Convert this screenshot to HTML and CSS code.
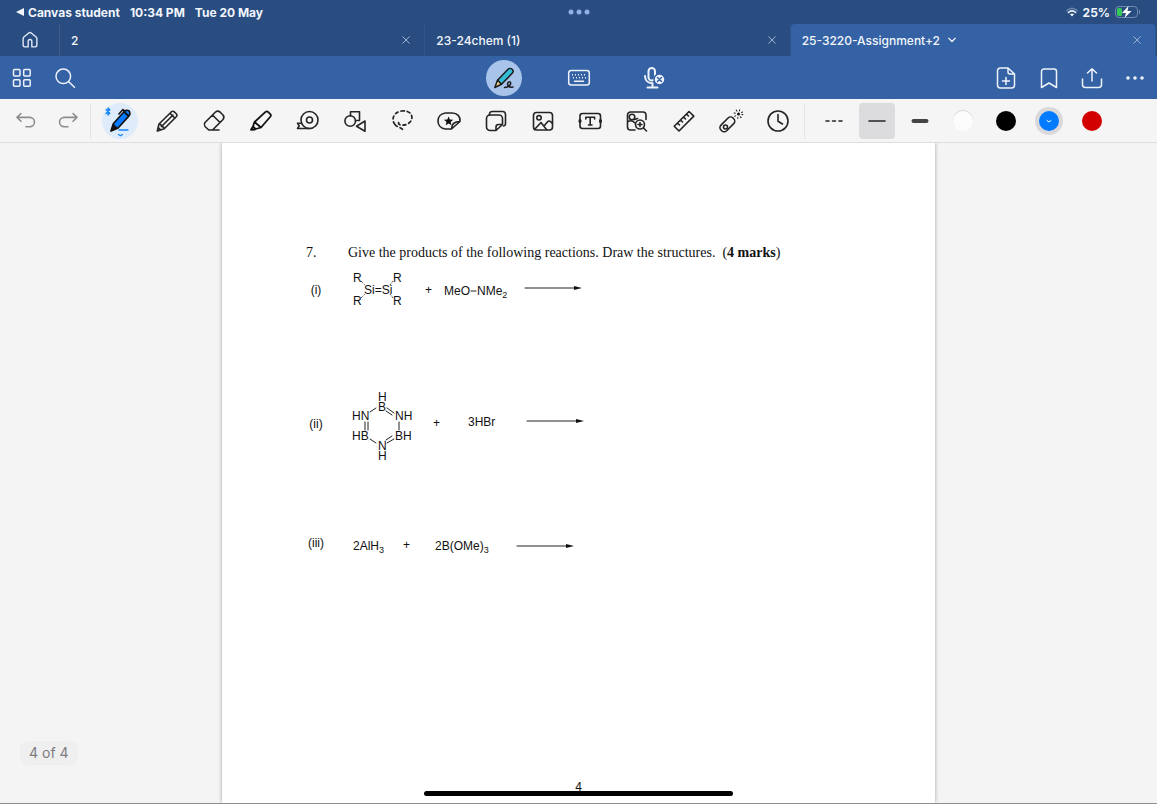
FILE: index.html
```html
<!DOCTYPE html>
<html lang="en">
<head>
    <meta charset="UTF-8">
    <meta name="viewport" content="width=device-width, initial-scale=1.0">
    <link rel="stylesheet" href="styles.css">
    <title>25-3220-Assignment+2</title>
</head>
<body>

    <header>
        <div class="status-bar">
            <div class="status-left">
                <a href="#" class="back-link"><svg class="back-arrow" viewBox="0 0 8 8"><path d="M8 0v8L0 4z"/></svg>Canvas student</a>
                <span>10:34 PM</span>
                <span class="date">Tue 20 May</span>
            </div>
            <svg class="multitask" viewBox="0 0 22 6"><circle cx="3" cy="3" r="2.5"/><circle cx="11" cy="3" r="2.5"/><circle cx="19" cy="3" r="2.5"/></svg>
            <div class="status-right">
                <svg class="wifi" viewBox="0 0 12 10"><path class="faint" d="M.8 3.6Q6-1 11.2 3.6"/><path d="M2.4 5.5Q6 2.4 9.6 5.5"/><path class="dot" d="M4 7.3Q6 5.8 8 7.3L6 9.5z"/></svg>
                <span>25%</span>
                <svg class="battery" viewBox="0 0 26 12"><rect class="case" x=".5" y=".5" width="22" height="11" rx="3.5"/><path class="case" d="M24.5 4.5v3"/><rect class="level" x="2" y="2" width="5" height="8" rx="1.5"/><path class="bolt" d="M13.5 0L7 7H11L9.5 12 16.500 5H12.500z"/></svg>
            </div>
        </div>

        <nav class="tabs">
            <button class="home" aria-label="Home"><svg viewBox="0 0 24 24"><path d="M10 19.500H6.500a2 2 0 0 1-2-2V10.500q0-1 .8-1.700L10.700 4.300q1.300-1 2.600 0L18.700 8.800q.8.700.8 1.700V17.500a2 2 0 0 1-2 2H14V13.500a2 2 0 0 0-4 0z"/></svg></button>
            <div class="tab">
                <a href="#">2</a>
                <button class="close" aria-label="Close tab"><svg viewBox="0 0 8 8"><path d="M.7.7l6.600 6.600M7.300.7L.7 7.300"/></svg></button>
            </div>
            <div class="tab">
                <a href="#">23-24chem (1)</a>
                <button class="close" aria-label="Close tab"><svg viewBox="0 0 8 8"><path d="M.7.7l6.600 6.600M7.300.7L.7 7.300"/></svg></button>
            </div>
            <div class="tab active">
                <a href="#">25-3220-Assignment+2 <svg class="chevron" viewBox="0 0 8 6"><path d="M.8 1.200L4 4.400l3.200-3.200"/></svg></a>
                <button class="close" aria-label="Close tab"><svg viewBox="0 0 8 8"><path d="M.7.7l6.600 6.600M7.300.7L.7 7.300"/></svg></button>
            </div>
        </nav>

        <div class="nav-bar">
            <div class="nav-group">
                <button aria-label="Pages"><svg viewBox="0 0 24 24"><rect x="3.500" y="3.500" width="6.500" height="6.500" rx="1"/><rect x="13.700" y="3.500" width="6.500" height="6.500" rx="1"/><rect x="3.500" y="13.700" width="6.500" height="6.500" rx="1"/><rect x="13.700" y="13.700" width="6.500" height="6.500" rx="1"/></svg></button>
                <button aria-label="Search"><svg viewBox="0 0 24 24"><circle cx="10.300" cy="10.300" r="7.300"/><path d="M15.700 15.700L21.500 21.300"/></svg></button>
            </div>
            <div class="nav-group modes">
                <button class="mode-active" aria-label="Write">
                    <svg viewBox="0 0 24 24">
                        <g class="ink">
                            <path fill="#35bcd6" d="M5.500 14.300L16 3.300a2.900 2.900 0 0 1 4.200 4L9.500 18.300z"/>
                            <path fill="#f5d78a" d="M5.500 14.300L2.800 21.500 9.500 18.300z"/>
                            <path d="M12.500 21.500c4-.5 7-3 6-5s-4 .5-2.500 3 3 2 5 1.500"/>
                        </g>
                    </svg>
                </button>
                <button aria-label="Type"><svg viewBox="0 0 24 24"><rect x="1.700" y="4.500" width="20.600" height="14.500" rx="2.500"/><path class="keys" d="M5 8.700h14.500M6 11.800h13"/><path d="M7.500 15.300h9"/></svg></button>
                <button aria-label="Record">
                    <svg viewBox="0 0 24 24"><rect class="mic" x="6.500" y="2" width="6.500" height="12.500" rx="3.200"/><path class="mic" d="M3 10c0 4 2.500 7.300 7.500 7.300v3.500M5.500 21.500h10"/><circle class="mic-badge" cx="17.500" cy="13.500" r="5.500"/><path class="mic-x" d="M15.500 11.500l4 4M19.500 11.500l-4 4"/></svg>
                </button>
            </div>
            <div class="nav-group right">
                <button aria-label="Add page"><svg viewBox="0 0 24 24"><path d="M14 2H6.500a3 3 0 0 0-3 3V19a3 3 0 0 0 3 3h11a3 3 0 0 0 3-3V8zM14 2v4a2 2 0 0 0 2 2h4.500M12 11.500v7M8.500 15h7"/></svg></button>
                <button aria-label="Bookmark"><svg viewBox="0 0 24 24"><path d="M4.500 21.500V5.500a2.500 2.500 0 0 1 2.500-2.500h10a2.500 2.500 0 0 1 2.500 2.500V21.500L12 17z"/></svg></button>
                <button aria-label="Share"><svg viewBox="0 0 24 24"><path d="M2.500 13v5.500a3 3 0 0 0 3 3h13a3 3 0 0 0 3-3V13M12 15V3M7.500 7L12 2.800 16.500 7"/></svg></button>
                <button aria-label="More"><svg viewBox="0 0 24 24"><g class="dots"><circle cx="5" cy="12" r="1.800"/><circle cx="12" cy="12" r="1.800"/><circle cx="19" cy="12" r="1.800"/></g></svg></button>
            </div>
        </div>
    </header>

    <div class="toolbar">
        <div class="history">
            <button aria-label="Undo"><svg viewBox="0 0 24 24"><path d="M7 4.500L3 8.400 7 12.300M3 8.400H15.800a4.600 4.600 0 0 1 0 9.300H12"/></svg></button>
            <button aria-label="Redo"><svg viewBox="0 0 24 24"><path d="M17 4.500L21 8.400 17 12.300M21 8.400H8.200a4.600 4.600 0 0 0 0 9.300H12"/></svg></button>
        </div>
        <div class="tools">
            <button class="pen" aria-label="Pen">
                <svg viewBox="0 0 36 36">
                    <path class="blue-line" d="M4 6.500L7.800 10.300 6 12V5l1.800 1.700-3.800 3.800M17 27h9M16.500 31.500l2 1.200 2-1.200"/>
                    <g transform="rotate(42 18 18)">
                        <path class="pen-body" d="M14.800 8.500h6.500v16L18 31.500 14.800 24.500z"/>
                        <path class="pen-cap" d="M15 8.500V6.500q3-4 6 0V8.500z"/>
                        <path class="pen-tip" d="M14.500 24.500h7L18 32z"/>
                        <path class="pen-clip" d="M14.800 7.500h-2.300v6"/>
                    </g>
                </svg>
            </button>
            <button aria-label="Pencil"><svg viewBox="0 0 24 24"><path d="M4 15L16.500 2.700q1.300-1 2.500 0L21.500 5q1 1.200 0 2.500L9.200 19.800 2.300 22zM15 4.200l5 5M6.500 17.500L18 6M4 15q2-.4 2.500 2.500Q9 17.500 9.200 19.800M2.300 22l1-3.500 2.500 2.500z"/></svg></button>
            <button aria-label="Eraser"><svg viewBox="0 0 24 24"><path d="M3 13.500L13.500 3q2.200-1.800 4.500 0L21 6q1.800 2.200 0 4.500L10.500 21H6.800L3 17.500q-1.500-2 0-4zM10.500 6L18 13.500M6.800 21H17"/></svg></button>
            <button aria-label="Highlighter"><svg viewBox="0 0 24 24"><path class="bold" d="M5.500 13L16.500 2.900Q18 1.900 19 2.900L21.500 5.300Q22.300 6.300 21.500 7.500L12 18.500 6.500 20 4 17.500zM5.500 13l6.500 5.500M4 17.500L2 20.800 6 20.500"/></svg></button>
            <button aria-label="Tape"><svg viewBox="0 0 24 24"><circle cx="13.500" cy="11" r="8.500"/><circle cx="13.500" cy="11" r="3"/><path d="M13.500 19.500H1.500L3.200 17 1.500 14.200H5.500"/></svg></button>
            <button aria-label="Shapes"><svg viewBox="0 0 24 24"><path d="M7.500 7V2.800H16.500V11.500H12.500"/><circle cx="7.200" cy="12" r="5.300"/><path d="M22 12V22.300L13.500 17.200z"/></svg></button>
            <button aria-label="Lasso"><svg viewBox="0 0 24 24"><path class="dashed" d="M5 15.500C1 11 3 3 12 2S24 8 20.500 12.500 8 17.500 8.500 13.500M5 15.500C8 19 12 18 13.500 22"/></svg></button>
            <button aria-label="Elements"><svg viewBox="0 0 24 24"><path d="M14.500 20H8.500C-1.500 19-1.500 5 8.500 4h6.500C20.500 4 23.500 7.500 23 12.500L14.500 20C14.500 15.500 17 12.500 23 12.500"/><path class="solid" d="M11.600 7.500l1.300 3 3.300.3-2.500 2.200.8 3.300-2.900-1.800-2.900 1.800.8-3.300L7 10.800l3.300-.3z"/></svg></button>
            <button aria-label="Sticky notes"><svg viewBox="0 0 24 24"><path d="M5.500 6V5a2.500 2.500 0 0 1 2.500-2.500H18.500a3 3 0 0 1 3 3V14.500a2.500 2.500 0 0 1-2 2.500"/><path d="M11.500 21.500H6A3.500 3.500 0 0 1 2.500 18V9.500A3.500 3.500 0 0 1 6 6H15a3.500 3.500 0 0 1 3.500 3.500V15.500L12 21.500V18a2.500 2.500 0 0 1 2.500-2.500h4"/></svg></button>
            <button aria-label="Image"><svg viewBox="0 0 24 24"><rect x="2.500" y="3.500" width="19" height="17.500" rx="3"/><circle cx="8" cy="8.800" r="2.200"/><path d="M3.500 20.500L10 13.500 15.500 20.500M13 17L17 12.300Q18.500 11 21.500 14.500"/></svg></button>
            <button aria-label="Text"><svg viewBox="0 0 24 24"><rect x="2" y="4.500" width="20.500" height="15" rx="2.500"/><path d="M7.800 10V8.200H16.600V10M12.200 8.200V16M10.500 16h3.500"/><path class="handle" d="M2 11.500v1M22.500 11.500v1"/></svg></button>
            <button aria-label="Image zoom"><svg viewBox="0 0 24 24"><path d="M10 21H5.500A3 3 0 0 1 2.500 18V6A3 3 0 0 1 5.500 3H18a3 3 0 0 1 3 3v4.500"/><circle cx="7" cy="8" r="2.800"/><path d="M3 12.500Q6.500 10.500 10 14M9.500 10.500L12.500 9.500"/><circle cx="15" cy="15.500" r="4.500"/><path d="M18.500 19L21.500 22M15 13.500v4M13 15.500h4"/></svg></button>
            <button aria-label="Ruler"><svg viewBox="0 0 24 24"><path d="M2.200 17.200L17 2.500l4.800 4.600L7 22zM5.500 14l2 2M8.500 11l2 2M11.500 8l2 2M14.500 5l2 2"/></svg></button>
            <button aria-label="Laser pointer"><svg viewBox="0 0 24 24"><rect x="-.5" y="11.500" width="17" height="8" rx="3.500" transform="rotate(-45 8 15)"/><circle cx="6.500" cy="18" r="2"/><circle class="rays" cx="19.500" cy="5" r="3.800"/><circle class="solid" cx="19.500" cy="5" r="1.500"/></svg></button>
            <button aria-label="Recent"><svg viewBox="0 0 24 24"><circle cx="12" cy="12" r="10"/><path d="M12 5.500V12.300L16.500 15"/></svg></button>
        </div>
        <div class="strokes">
            <button aria-label="Dashed line"><svg viewBox="0 0 24 24"><path d="M4 12h3M10.500 12h3M17 12h3"/></svg></button>
            <button class="selected" aria-label="Thin line"><svg viewBox="0 0 24 24"><path d="M4 12h16"/></svg></button>
            <button aria-label="Thick line"><svg viewBox="0 0 24 24"><path class="thick" d="M5.500 12h13"/></svg></button>
            <button aria-label="White"><span class="swatch white"></span></button>
            <button aria-label="Black"><span class="swatch black"></span></button>
            <button aria-label="Blue"><span class="swatch blue"><svg viewBox="0 0 8 6"><path d="M2 2.500L4 4 6 2.500"/></svg></span></button>
            <button aria-label="Red"><span class="swatch red"></span></button>
        </div>
    </div>

    <main>
        <article class="page">
            <div class="question">
                <span>7.</span>
                <p>Give the products of the following reactions. Draw the structures.&nbsp; (<b>4 marks</b>)</p>
            </div>

            <div class="reaction first">
                <span>(i)</span>
                <svg width="250" height="40" viewBox="0 0 250 40">
                    <text x="5" y="12">R</text>
                    <text x="45" y="12">R</text>
                    <text x="16" y="24">Si=Si</text>
                    <text x="5" y="35">R</text>
                    <text x="45" y="35">R</text>
                    <path class="wedge" d="M13 11l4 4M13 28l4-4M42 15l3-4M42 24l3 4"/>
                    <text x="77" y="24">+</text>
                    <text x="96" y="25">MeO</text>
                    <path d="M123 21h5"/>
                    <text x="129" y="25">NMe<tspan class="sub" dy="3">2</tspan></text>
                    <path d="M177 18h50"/><path class="head" d="M226 16l8 2-8 2z"/>
                </svg>
            </div>

            <div class="reaction second">
                <span>(ii)</span>
                <svg width="250" height="76" viewBox="0 0 250 76">
                    <text x="30" y="15">H</text>
                    <text x="30" y="25">B</text>
                    <text x="4" y="34">HN</text>
                    <text x="47" y="34">NH</text>
                    <text x="4" y="54">HB</text>
                    <text x="47" y="54">BH</text>
                    <text x="30" y="64">N</text>
                    <text x="30" y="74">H</text>
                    <path d="M22 26l6-4M39 22l7 5M38 25l6 4M17 36v8M20 36v8M51 36v8M22 53l6 4M39 57l7-4M38 54l6-4"/>
                    <text x="85" y="41">+</text>
                    <text x="120" y="40">3HBr</text>
                    <path d="M179 35h50"/><path class="head" d="M228 33l8 2-8 2z"/>
                </svg>
            </div>

            <div class="reaction third">
                <span>(iii)</span>
                <svg width="250" height="24" viewBox="0 0 250 24">
                    <text x="5" y="19">2AlH<tspan class="sub" dy="3">3</tspan></text>
                    <text x="55" y="18">+</text>
                    <text x="87" y="19">2B(OMe)<tspan class="sub" dy="3">3</tspan></text>
                    <path d="M169 15h50"/><path class="head" d="M218 13l8 2-8 2z"/>
                </svg>
            </div>

            <footer>4</footer>
        </article>
        <div class="page-count">4 of 4</div>
        <div class="home-indicator"></div>
    </main>

</body>
</html>
```

FILE: styles.css
```css
* {
    box-sizing: border-box;
}

body {
    margin: 0;
    min-height: 100vh;
    display: flex;
    flex-direction: column;
    font-family: Inter, sans-serif;
    background-color: #f4f4f5;
}

button {
    display: flex;
    align-items: center;
    justify-content: center;
    flex: none;
    width: 36px;
    height: 36px;
    padding: 0;
    border: none;
    background: none;
}

a {
    color: inherit;
    text-decoration: none;
}

svg {
    display: block;
    flex: none;
    fill: none;
    stroke-linecap: round;
    stroke-linejoin: round;
    overflow: visible;
}

button svg {
    width: 24px;
    height: 24px;
}

header {
    background-color: #294d80;
    color: #f2f6fc;
}

/* status bar */
.status-bar {
    display: grid;
    grid-template-columns: 1fr auto 1fr;
    align-items: center;
    height: 24px;
    padding: 0 16px;
    font-size: 12px;
    font-weight: 700;
}

.status-left,
.status-right {
    display: flex;
    align-items: center;
    gap: 10px;
}

.status-right {
    justify-content: flex-end;
    gap: 5px;
}

.back-link {
    display: flex;
    align-items: center;
    gap: 4px;
}

.back-arrow {
    width: 8px;
    height: 8px;
    fill: #f2f6fc;
}

.multitask {
    width: 22px;
    height: 6px;
    fill: #8fb0e8;
}

.wifi {
    width: 12px;
    height: 10px;
    stroke: #f2f6fc;
    stroke-width: 1.6;
}

.wifi .faint {
    stroke: #6482ac;
}

.wifi .dot {
    fill: #f2f6fc;
    stroke: none;
}

.battery {
    width: 26px;
    height: 12px;
}

.battery .case {
    stroke: #7189ad;
}

.battery .level {
    fill: #34c759;
}

.battery .bolt {
    fill: #fff;
}

/* document tabs */
.tabs {
    display: flex;
    height: 32px;
    padding-right: 1px;
}

.home {
    width: 60px;
    height: 32px;
    border-right: 1px solid #3b5c8c;
}

.home svg {
    stroke: #e3ebf6;
    stroke-width: 1.5;
    width: 22px;
    height: 22px;
}

.tab {
    flex: 1;
    display: flex;
    align-items: center;
    justify-content: space-between;
    padding: 0 8px 0 11px;
    border-right: 1px solid #2f568c;
    font-size: 12px;
    font-weight: 500;
}

.tab a {
    display: flex;
    align-items: center;
    gap: 8px;
}

.tab.active {
    background-color: #3562a4;
    border-radius: 4px 4px 0 0;
}

.close {
    width: 20px;
    height: 20px;
}

.close svg {
    width: 8px;
    height: 8px;
    stroke: #9fb4d2;
}

.chevron {
    width: 8px;
    height: 6px;
    stroke: #e3ebf6;
    stroke-width: 1.4;
}

/* navigation bar */
.nav-bar {
    display: grid;
    grid-template-columns: 1fr auto 1fr;
    align-items: center;
    height: 43px;
    padding: 0 4px;
    background-color: #3562a4;
}

.nav-group {
    display: flex;
    gap: 7px;
}

.nav-group svg {
    stroke: #eef3fb;
    stroke-width: 1.5;
}

.modes {
    gap: 39px;
}

.right {
    justify-content: flex-end;
}

.mode-active {
    border-radius: 50%;
    background-color: #a9c4ea;
}

.nav-group .ink {
    stroke: #1d1d1f;
}

.nav-group .keys {
    stroke-dasharray: 1 2;
    stroke-linecap: butt;
}

.nav-group .mic {
    stroke-width: 2;
}

.mic-badge {
    fill: #eef3fb;
    stroke: #3562a4;
}

.nav-group .mic-x {
    stroke: #3562a4;
}

.dots {
    fill: #eef3fb;
    stroke: none;
}

/* drawing tools */
.toolbar {
    display: flex;
    align-items: center;
    height: 44px;
    padding-left: 8px;
    border-bottom: 1px solid #dedee0;
    background-color: #f5f5f6;
}

.history,
.tools,
.strokes {
    display: flex;
    align-items: center;
}

.history {
    gap: 6px;
    padding-right: 4px;
}

.tools {
    gap: 11px;
    padding: 0 8px 0 11px;
    border-left: 1px solid #e4e4e6;
    border-right: 1px solid #e4e4e6;
}

.strokes {
    gap: 7px;
    padding-left: 11px;
}

.toolbar svg {
    stroke: #242426;
    stroke-width: 1.6;
}

.history svg {
    stroke: #8e8e90;
}

.tools .pen {
    border-radius: 50%;
    background-color: #deebfb;
}

.pen svg {
    width: 36px;
    height: 36px;
}

.pen-body,
.pen-cap {
    fill: #0a7aff;
    stroke: #111;
}

.pen-tip,
.solid {
    fill: #111;
    stroke: none;
}

.pen-clip {
    stroke: #111;
}

.blue-line {
    stroke: #1585f5;
    stroke-width: 1.3;
}

.bold {
    stroke: #111;
    stroke-width: 1.8;
}

.dashed {
    stroke-width: 1.7;
    stroke-dasharray: 3 3;
}

.handle {
    stroke-width: 3;
}

.rays {
    stroke-width: 2;
    stroke-dasharray: 1 2;
    stroke-linecap: butt;
}

.strokes .selected {
    border-radius: 4px;
    background-color: #dcdcde;
}

.thick {
    stroke: #444;
    stroke-width: 4;
}

.swatch {
    display: flex;
    align-items: center;
    justify-content: center;
    width: 20px;
    height: 20px;
    border-radius: 50%;
}

.white {
    background-color: #fcfcfc;
    box-shadow: 0 -1px 1px #d8d8d8;
}

.black {
    background-color: #000;
}

.blue {
    background-color: #007aff;
    box-shadow: 0 0 0 4px #d9d9db;
}

.blue svg {
    width: 8px;
    height: 6px;
    stroke: #fff;
    stroke-width: 1;
}

.red {
    background-color: #d20000;
}

/* document */
main {
    position: relative;
    flex: 1;
    display: flex;
    border-bottom: 1px solid #8e8e90;
}

.page {
    flex: 1;
    display: flex;
    flex-direction: column;
    margin: 0 222px;
    padding: 100px 84px 0;
    background-color: #fff;
    box-shadow: 0 0 4px #a4a4a6;
    clip-path: inset(0 -4px);
    color: #111;
}

.question {
    display: flex;
    font-family: "Liberation Serif", serif;
    font-size: 14px;
    line-height: 20px;
}

.question span {
    width: 42px;
}

.question p {
    margin: 0;
}

.reaction {
    display: flex;
    align-items: center;
    font-family: "Liberation Sans", sans-serif;
    font-size: 12px;
}

.reaction span {
    width: 20px;
    margin-right: 22px;
    text-align: center;
}

.reaction svg {
    stroke: #222;
    stroke-width: 1;
}

.reaction text,
.reaction .head {
    fill: #111;
    stroke: none;
}

.reaction .wedge {
    stroke-dasharray: 1 1;
    stroke-linecap: butt;
}

.sub {
    font-size: 9px;
}

.first {
    margin-top: 7px;
}

.second {
    margin-top: 76px;
}

.third {
    margin-top: 69px;
}

footer {
    margin-top: auto;
    padding-bottom: 8px;
    font-family: "Liberation Sans", sans-serif;
    font-size: 12px;
    line-height: 16px;
    text-align: center;
}

.page-count {
    position: absolute;
    left: 20px;
    bottom: 38px;
    padding: 0 9px;
    border-radius: 8px;
    background-color: #efeff0;
    color: #7c7c7e;
    font-size: 14px;
    line-height: 24px;
}

.home-indicator {
    position: absolute;
    left: 50%;
    bottom: 7px;
    width: 309px;
    height: 5px;
    margin-left: -155px;
    border-radius: 3px;
    background-color: #000;
}
```
